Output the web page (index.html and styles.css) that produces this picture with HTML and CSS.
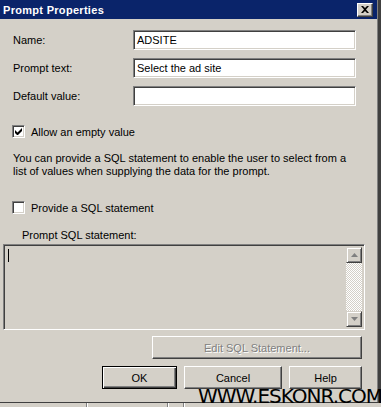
FILE: index.html
```html
<!DOCTYPE html>
<html lang="en">
<head>
    <meta charset="UTF-8">
    <title>Prompt Properties</title>
    <link rel="stylesheet" href="styles.css">
</head>
<body>
    <div class="screen">
        <div class="window">
            <div class="titlebar">
                <span class="title">Prompt Properties</span>
                <span class="close">
                    <svg width="8" height="7" viewBox="0 0 8 7"><path d="M0 0h2l2 2 2-2h2L5 3.5 8 7H6L4 5 2 7H0l3-3.5z" fill="#000"/></svg>
                </span>
            </div>
            <div class="content">
                <div class="field-row">
                    <label class="field-label">Name:</label>
                    <div class="textbox">ADSITE</div>
                </div>
                <div class="field-row">
                    <label class="field-label">Prompt text:</label>
                    <div class="textbox">Select the ad site</div>
                </div>
                <div class="field-row">
                    <label class="field-label">Default value:</label>
                    <div class="textbox"></div>
                </div>

                <div class="check-row first-check">
                    <span class="checkbox">
                        <svg width="7" height="7" viewBox="0 0 7 7"><path d="M0 2v3l2 2h1l4-4V0L2.5 4.5z" fill="#000"/></svg>
                    </span>
                    <span>Allow an empty value</span>
                </div>

                <p class="hint">You can provide a SQL statement to enable the user to select from a list of values when supplying the data for the prompt.</p>

                <div class="check-row second-check">
                    <span class="checkbox"></span>
                    <span>Provide a SQL statement</span>
                </div>

                <div class="sql-label">Prompt SQL statement:</div>
                <div class="sql-box">
                    <span class="caret"></span>
                    <div class="scrollbar">
                        <span class="arrow">
                            <svg width="7" height="4" viewBox="0 0 7 4"><path d="M3.5 0L7 4H0z" fill="#808080"/></svg>
                        </span>
                        <span class="track"></span>
                        <span class="arrow">
                            <svg width="7" height="4" viewBox="0 0 7 4"><path d="M0 0h7L3.5 4z" fill="#808080"/></svg>
                        </span>
                    </div>
                </div>

                <div class="edit-row">
                    <button class="btn btn-disabled edit-btn">Edit SQL Statement...</button>
                </div>
                <div class="button-row">
                    <button class="btn btn-default ok-btn">OK</button>
                    <button class="btn cancel-btn">Cancel</button>
                    <button class="btn help-btn">Help</button>
                </div>
            </div>
        </div>
        <div class="taskstrip">
            <span class="seg seg1"></span>
            <span class="seg seg2"></span>
            <span class="seg seg3"></span>
        </div>
        <div class="watermark">WWW.ESKONR.COM</div>
    </div>
</body>
</html>
```

FILE: styles.css
```css
body { margin: 0; padding: 0; background: #d4d0c8; font-family: "Liberation Sans", Arial, sans-serif; font-size: 11px; color: #000; }
.screen { position: relative; width: 381px; height: 407px; overflow: hidden; }
.window { width: 377px; height: 402px; background: #d4d0c8; border-right: 1px solid #808080; display: flex; flex-direction: column; position: relative; }
.window::after { content: ""; position: absolute; top: 0; right: -4px; width: 3px; height: 100%; background: #404040; }

.titlebar { height: 19px; background: #0a246a; display: flex; align-items: center; justify-content: space-between; padding: 0 4px 0 3px; }
.title { color: #fff; font-weight: bold; font-size: 11px; letter-spacing: 0.3px; }
.close { width: 16px; height: 14px; box-sizing: border-box; background: #d4d0c8; border: 1px solid; border-color: #fff #404040 #404040 #fff; box-shadow: inset -1px -1px 0 #808080; display: flex; align-items: center; justify-content: center; }

.content { padding: 11px 0 0 0; flex: 1; }

.field-row { display: flex; align-items: center; height: 20px; margin-bottom: 8px; }
.field-label { width: 120px; padding-left: 13px; }
.textbox { width: 223px; height: 20px; box-sizing: border-box; background: #fff; border: 1px solid; border-color: #808080 #fff #fff #808080; box-shadow: inset 1px 1px 0 #404040, inset -1px -1px 0 #d4d0c8; padding: 3px 0 0 3px; }

.check-row { display: flex; align-items: center; gap: 6px; padding-left: 12px; height: 13px; }
.first-check { margin-top: 19px; }
.second-check { margin-top: 23px; }
.checkbox { width: 13px; height: 13px; box-sizing: border-box; background: #fff; border: 1px solid; border-color: #808080 #fff #fff #808080; box-shadow: inset 1px 1px 0 #404040, inset -1px -1px 0 #d4d0c8; display: flex; align-items: center; justify-content: center; }

.hint { margin: 14px 0 0 13px; line-height: 13px; width: 345px; }

.sql-label { margin-top: 15px; padding-left: 22px; line-height: 13px; }
.sql-box { margin: 2px 0 0 3px; width: 362px; height: 86px; box-sizing: border-box; border: 1px solid; border-color: #808080 #fff #fff #808080; box-shadow: inset 1px 1px 0 #404040, inset -1px -1px 0 #d4d0c8; display: flex; justify-content: space-between; padding: 2px; }
.caret { width: 1px; height: 13px; background: #000; margin: 2px 0 0 2px; }
.scrollbar { width: 16px; display: flex; flex-direction: column; }
.arrow { height: 16px; box-sizing: border-box; background: #d4d0c8; border: 1px solid; border-color: #d4d0c8 #404040 #404040 #d4d0c8; box-shadow: inset 1px 1px 0 #fff, inset -1px -1px 0 #808080; display: flex; align-items: center; justify-content: center; }
.track { flex: 1; background-color: #fff; background-image: linear-gradient(45deg, #d4d0c8 25%, transparent 25%, transparent 75%, #d4d0c8 75%), linear-gradient(45deg, #d4d0c8 25%, transparent 25%, transparent 75%, #d4d0c8 75%); background-size: 2px 2px; background-position: 0 0, 1px 1px; }

.btn { font-family: "Liberation Sans", Arial, sans-serif; font-size: 11px; height: 23px; box-sizing: border-box; background: #d4d0c8; border: 1px solid; border-color: #fff #404040 #404040 #fff; box-shadow: inset -1px -1px 0 #808080; padding: 0; color: #000; }
.btn-default { border: 1px solid #000; box-shadow: inset 1px 1px 0 #fff, inset -1px -1px 0 #404040, inset -2px -2px 0 #808080; }
.btn-disabled { color: #808080; text-shadow: 1px 1px 0 #fff; }

.edit-row { display: flex; justify-content: flex-end; padding-right: 15px; margin-top: 6px; }
.edit-btn { width: 210px; }
.button-row { display: flex; justify-content: flex-end; gap: 7px; padding-right: 15px; margin-top: 7px; }
.ok-btn { width: 75px; }
.cancel-btn { width: 98px; }
.help-btn { width: 73px; }

.taskstrip { height: 5px; border-top: 1px solid #404040; background: #d4d0c8; display: flex; }
.seg { border-right: 1px solid #808080; box-shadow: 1px 0 0 #fff; height: 100%; }
.seg1 { width: 86px; margin-right: 6px; }
.seg2 { width: 74px; margin-right: 5px; }
.seg3 { width: 10px; }

.watermark { position: absolute; right: -1px; bottom: 2px; font-family: "DejaVu Sans", sans-serif; font-size: 20px; line-height: 18px; color: #000; letter-spacing: -1px; }
```
